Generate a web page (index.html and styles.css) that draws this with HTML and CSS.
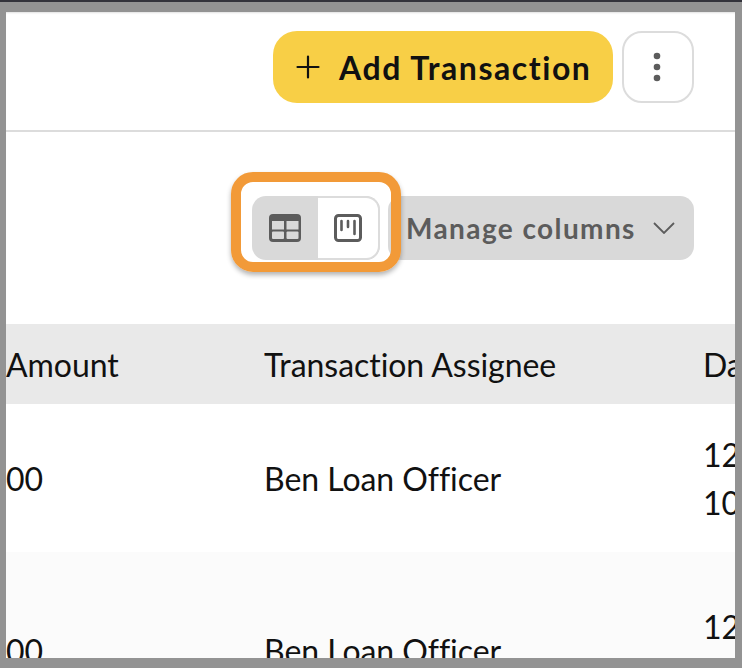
FILE: index.html
```html
<!DOCTYPE html>
<html lang="en">
<head>
<meta charset="utf-8">
<title>Transactions</title>
<link rel="stylesheet" href="styles.css">
</head>
<body>
<main class="frame">
  <header class="topbar">
    <button class="add-btn">
      <svg class="plus" width="24" height="24" viewBox="0 0 24 24"><path d="M12 1.5v21M1.5 12h21" fill="none" stroke="#111" stroke-width="2.2" stroke-linecap="round"/></svg>
      <span>Add Transaction</span>
    </button>
    <button class="kebab" aria-label="More">
      <svg width="8" height="30" viewBox="0 0 8 30"><circle cx="4" cy="4" r="3.3" fill="#5c5c5c"/><circle cx="4" cy="15" r="3.3" fill="#5c5c5c"/><circle cx="4" cy="26" r="3.3" fill="#5c5c5c"/></svg>
    </button>
  </header>
  <section class="toolbar">
    <div class="toggle-wrap">
      <div class="toggle">
        <span class="seg seg-off">
          <svg width="32" height="28" viewBox="0 0 32 28"><rect width="32" height="28" rx="4" fill="#5c5c5c"/><rect x="3" y="7" width="12" height="8.5" fill="#d9d9d9"/><rect x="17.5" y="7" width="12" height="8.5" fill="#d9d9d9"/><rect x="3" y="17.5" width="12" height="7.5" rx="1" fill="#d9d9d9"/><rect x="17.5" y="17.5" width="12" height="7.5" rx="1" fill="#d9d9d9"/></svg>
        </span>
        <span class="seg seg-on">
          <svg width="28" height="28" viewBox="0 0 28 28"><rect x="1.5" y="1.5" width="25" height="25" rx="3" fill="none" stroke="#5c5c5c" stroke-width="3"/><path d="M7.5 7v9M14 7v6M20.5 7v13" fill="none" stroke="#5c5c5c" stroke-width="2.6" stroke-linecap="round"/></svg>
        </span>
      </div>
      <div class="highlight"></div>
    </div>
    <button class="manage">
      <span>Manage columns</span>
      <svg width="22" height="12" viewBox="0 0 22 12"><path d="M1 1l10 10L21 1" fill="none" stroke="#5c5c5c" stroke-width="1.8"/></svg>
    </button>
  </section>
  <section class="table">
    <div class="row head">
      <div class="c1">Amount</div><div class="c2">Transaction Assignee</div><div class="c3">Date</div>
    </div>
    <div class="row first">
      <div class="c1">00</div><div class="c2">Ben Loan Officer</div><div class="c3">12/<br>10:</div>
    </div>
    <div class="row second">
      <div class="c1">00</div><div class="c2">Ben Loan Officer</div><div class="c3">12/<br>10:</div>
    </div>
  </section>
</main>
</body>
</html>
```
FILE: styles.css
```css
* { box-sizing: border-box; }
html, body { margin: 0; height: 100%; }
body {
  background: #939393;
  border-top: 2px solid #33333b;
  padding: 10px 7px 10px 6px;
  font-family: Lato, "Liberation Sans", sans-serif;
  font-variant-ligatures: none;
  color: #111;
  overflow: hidden;
}
.frame {
  height: 646px;
  background: #fff;
  overflow: hidden;
  box-shadow: inset 0 2px 2px -1px rgba(0,0,0,.12);
}
button { font-family: inherit; font-variant-ligatures: none; border: 0; padding: 0; }
.topbar {
  height: 120px;
  border-bottom: 2px solid #dcdcdc;
  display: flex;
  justify-content: flex-end;
  align-items: flex-start;
  gap: 9px;
  padding: 19px 41px 0 0;
}
.add-btn {
  width: 340px;
  height: 72px;
  border-radius: 24px;
  background: #f8cf46;
  color: #111;
  display: flex;
  align-items: center;
  gap: 19px;
  padding-left: 23px;
  font-size: 32px;
  font-weight: 700;
  letter-spacing: 1.55px;
}
.kebab {
  width: 72px;
  height: 72px;
  border: 2px solid #dcdcdc;
  border-radius: 20px;
  background: #fff;
  display: flex;
  align-items: center;
  justify-content: center;
  padding-right: 2px;
}
.toolbar {
  height: 192px;
  display: flex;
  justify-content: flex-end;
  align-items: flex-start;
  gap: 8px;
  padding: 64px 41px 0 0;
}
.toggle-wrap { position: relative; }
.toggle {
  width: 128px;
  height: 64px;
  border-radius: 14px;
  background: #d9d9d9;
  display: flex;
  overflow: hidden;
}
.seg { display: flex; align-items: center; justify-content: center; }
.seg-off { width: 66px; }
.seg-on {
  width: 62px;
  background: #fff;
  border: 2px solid #dcdcdc;
  border-left: 0;
  border-radius: 0 14px 14px 0;
}
.highlight {
  position: absolute;
  left: -21px;
  right: -21px;
  top: -24px;
  bottom: -12px;
  border: 10px solid #f29a38;
  border-radius: 22px;
  box-shadow: 0 3px 5px rgba(0,0,0,.3);
}
.manage {
  width: 306px;
  height: 64px;
  border-radius: 14px;
  background: #d9d9d9;
  color: #5c5c5c;
  display: flex;
  align-items: center;
  justify-content: space-between;
  padding: 0 19px 0 18px;
  font-size: 28px;
  font-weight: 700;
  letter-spacing: 1.4px;
}
.table { font-size: 32px; line-height: 48px; letter-spacing: -0.05px; }
.row { display: flex; align-items: center; white-space: nowrap; padding-top: 2px; }
.head { height: 80px; background: #e9e9e9; }
.first { height: 148px; background: #fff; }
.second { height: 196px; background: #fbfbfb; }
.c1 { width: 258px; flex: none; }
.c2 { width: 440px; flex: none; }
.c3 { width: 100px; flex: none; margin-left: -1px; }
```
